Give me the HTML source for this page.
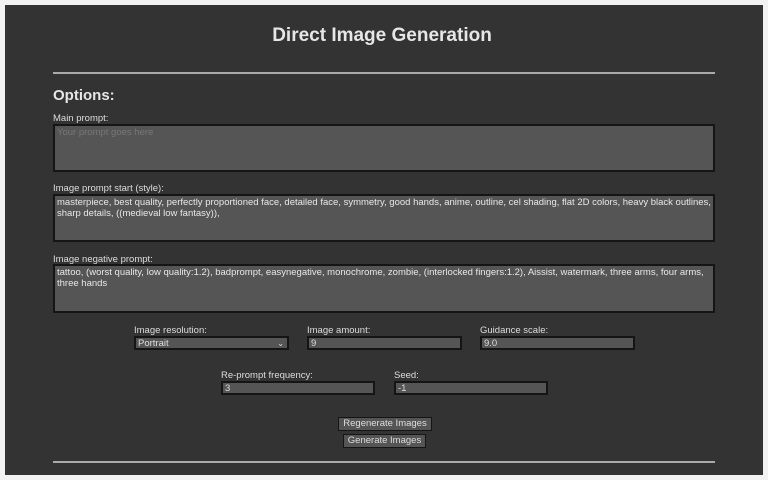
<!DOCTYPE html>
<html><head><style>
html,body{margin:0;padding:0;width:768px;height:480px;background:#f2f2f2;overflow:hidden;font-family:"Liberation Sans",sans-serif;}
#p{position:absolute;left:5px;top:5px;width:758px;height:470px;background:#333;}
.a{position:absolute;color:#e6e6e6;}
.l{position:absolute;font-size:9.5px;color:#ddd;line-height:11px;white-space:nowrap;}
.t{position:absolute;left:53px;width:658px;background:#555;border:2px solid #151515;color:#e8e8e8;font-size:9.5px;line-height:11px;padding:1px 2px;box-sizing:border-box;}
.i{position:absolute;height:14px;background:#555;border:2px solid #151515;box-sizing:border-box;color:#ddd;font-size:9.5px;line-height:11px;padding-left:2px;}
.hr{position:absolute;left:53px;width:662px;height:2px;background:#aaa;}
.b{position:absolute;height:14px;background:#555;border:1.5px solid #151515;box-sizing:border-box;color:#ddd;font-size:9.5px;line-height:11px;text-align:center;}
</style></head><body>
<div id="p"></div>
<div class="a" style="left:-2px;width:768px;top:25px;text-align:center;font-size:19px;font-weight:bold;">Direct Image Generation</div>
<div class="hr" style="top:72px"></div>
<div class="a" style="left:53px;top:87px;font-size:15px;font-weight:bold;">Options:</div>
<div class="l" style="left:53px;top:113px">Main prompt:</div>
<div class="t" style="top:124px;height:48px;width:662px;color:#777">Your prompt goes here</div>
<div class="l" style="left:53px;top:183px">Image prompt start (style):</div>
<div class="t" style="top:194px;height:48px;width:662px">masterpiece, best quality, perfectly proportioned face, detailed face, symmetry, good hands, anime, outline, cel shading, flat 2D colors, heavy black outlines, sharp details, ((medieval low fantasy)),</div>
<div class="l" style="left:53px;top:254px">Image negative prompt:</div>
<div class="t" style="top:264px;height:49px;width:662px">tattoo, (worst quality, low quality:1.2), badprompt, easynegative, monochrome, zombie, (interlocked fingers:1.2), Aissist, watermark, three arms, four arms, three hands</div>
<div class="l" style="left:134px;top:325px">Image resolution:</div>
<div class="i" style="left:134px;top:336px;width:155px">Portrait<span style="position:absolute;right:3px;top:0;font-size:8px">&#8964;</span></div>
<div class="l" style="left:307px;top:325px">Image amount:</div>
<div class="i" style="left:307px;top:336px;width:155px">9</div>
<div class="l" style="left:480px;top:325px">Guidance scale:</div>
<div class="i" style="left:480px;top:336px;width:155px">9.0</div>
<div class="l" style="left:221px;top:370px">Re-prompt frequency:</div>
<div class="i" style="left:221px;top:381px;width:154px">3</div>
<div class="l" style="left:394px;top:370px">Seed:</div>
<div class="i" style="left:394px;top:381px;width:154px">-1</div>
<div class="b" style="left:338px;top:417px;width:94px">Regenerate Images</div>
<div class="b" style="left:343px;top:434px;width:83px">Generate Images</div>
<div class="hr" style="top:461px"></div>
</body></html>
